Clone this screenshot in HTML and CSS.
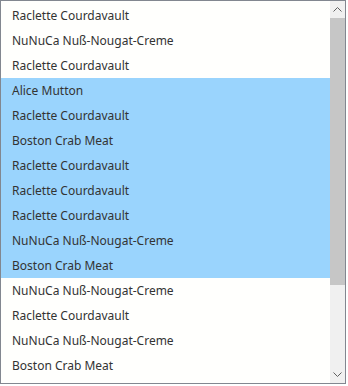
FILE: index.html
```html
<!DOCTYPE html>
<html>
<head>
<meta charset="utf-8">
<link rel="stylesheet" href="styles.css">
</head>
<body>
<div class="listbox">
  <ul class="items">
    <li class="item">Raclette Courdavault</li>
    <li class="item">NuNuCa Nuß-Nougat-Creme</li>
    <li class="item">Raclette Courdavault</li>
    <li class="item selected">Alice Mutton</li>
    <li class="item selected">Raclette Courdavault</li>
    <li class="item selected">Boston Crab Meat</li>
    <li class="item selected">Raclette Courdavault</li>
    <li class="item selected">Raclette Courdavault</li>
    <li class="item selected">Raclette Courdavault</li>
    <li class="item selected">NuNuCa Nuß-Nougat-Creme</li>
    <li class="item selected">Boston Crab Meat</li>
    <li class="item">NuNuCa Nuß-Nougat-Creme</li>
    <li class="item">Raclette Courdavault</li>
    <li class="item">NuNuCa Nuß-Nougat-Creme</li>
    <li class="item">Boston Crab Meat</li>
  </ul>
  <div class="scrollbar">
    <div class="sb-btn">
      <svg width="9" height="5" viewBox="0 0 9 5"><path d="M0.5 4.5 L4.5 0.5 L8.5 4.5" fill="none" stroke="#606060" stroke-width="1"/></svg>
    </div>
    <div class="sb-track">
      <div class="sb-thumb"></div>
    </div>
    <div class="sb-btn">
      <svg width="9" height="5" viewBox="0 0 9 5"><path d="M0.5 0.5 L4.5 4.5 L8.5 0.5" fill="none" stroke="#606060" stroke-width="1"/></svg>
    </div>
  </div>
</div>
</body>
</html>
```

FILE: styles.css
```css
html, body {
  margin: 0;
  padding: 0;
  background: #ffffff;
}
.listbox {
  box-sizing: border-box;
  width: 346px;
  height: 384px;
  border: 1px solid #828790;
  display: flex;
  background: #fffffd;
  overflow: hidden;
}
.items {
  list-style: none;
  margin: 0;
  padding: 2px 0 0 0;
  flex: 1;
  overflow: hidden;
}
.item {
  height: 25px;
  line-height: 25px;
  padding-left: 11px;
  font-family: "Noto Sans", "Open Sans", sans-serif;
  font-size: 12px;
  color: #333333;
  white-space: nowrap;
}
.item.selected {
  background: #9ad4fd;
}
.scrollbar {
  width: 15px;
  display: flex;
  flex-direction: column;
  background: #f0f0f0;
}
.sb-btn {
  height: 17px;
  display: flex;
  align-items: center;
  justify-content: center;
  flex: none;
}
.sb-track {
  flex: 1;
}
.sb-thumb {
  height: 267px;
  background: #c6c6c6;
  margin: 0;
}
```
